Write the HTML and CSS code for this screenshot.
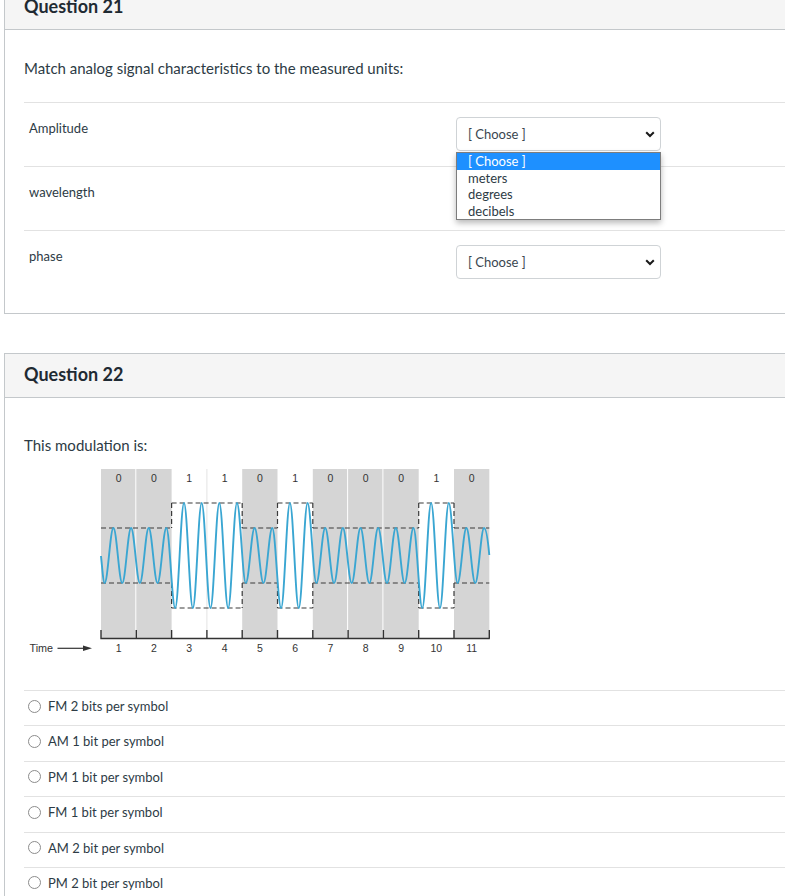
FILE: index.html
```html
<!DOCTYPE html>
<html lang="en">
<head>
<meta charset="utf-8">
<title>Quiz</title>
<link rel="stylesheet" href="styles.css">
</head>
<body>
<div class="page">
  <section class="question q21">
    <header class="q-header"><h2>Question 21</h2></header>
    <div class="q-body">
      <p class="q-text">Match analog signal characteristics to the measured units:</p>
      <div class="match-list">
        <div class="match-row">
          <div class="match-label">Amplitude</div>
          <div class="select-wrap">
            <div class="select"><span>[ Choose ]</span><svg class="chev" width="10" height="7" viewBox="0 0 10 7"><path d="M1.2 1.2 L5 5 L8.8 1.2"/></svg></div>
            <ul class="dropdown">
              <li class="selected">[ Choose ]</li>
              <li>meters</li>
              <li>degrees</li>
              <li>decibels</li>
            </ul>
          </div>
        </div>
        <div class="match-row">
          <div class="match-label">wavelength</div>
          <div class="select-wrap"></div>
        </div>
        <div class="match-row">
          <div class="match-label">phase</div>
          <div class="select-wrap">
            <div class="select"><span>[ Choose ]</span><svg class="chev" width="10" height="7" viewBox="0 0 10 7"><path d="M1.2 1.2 L5 5 L8.8 1.2"/></svg></div>
          </div>
        </div>
      </div>
    </div>
  </section>

  <section class="question q22">
    <header class="q-header"><h2>Question 22</h2></header>
    <div class="q-body">
      <p class="q-text">This modulation is:</p>
      <svg class="diagram" width="470" height="195" viewBox="24 462 470 195">
        <g class="shade">
          <rect x="101" y="469" width="34.3" height="169"/>
          <rect x="136.3" y="469" width="35.3" height="169"/>
          <rect x="242.2" y="469" width="35.3" height="169"/>
          <rect x="312.8" y="469" width="34.3" height="169"/>
          <rect x="348.1" y="469" width="34.3" height="169"/>
          <rect x="383.4" y="469" width="35.3" height="169"/>
          <rect x="454" y="469" width="35.3" height="169"/>
        </g>
        <line class="faint" x1="206.9" y1="469" x2="206.9" y2="630"/>
        <g class="dash">
          <path d="M101 528 H171.6 M101 583 H171.6"/>
          <path d="M171.6 503 H242.2 M171.6 608 H242.2 M171.6 503 V528 M171.6 583 V608 M242.2 503 V528 M242.2 583 V608"/>
          <path d="M242.2 528 H277.5 M242.2 583 H277.5"/>
          <path d="M277.5 503 H312.8 M277.5 608 H312.8 M277.5 503 V528 M277.5 583 V608 M312.8 503 V528 M312.8 583 V608"/>
          <path d="M312.8 528 H418.7 M312.8 583 H418.7"/>
          <path d="M418.7 503 H454 M418.7 608 H454 M418.7 503 V528 M418.7 583 V608 M454 503 V528 M454 583 V608"/>
          <path d="M454 528 H489.3 M454 583 H489.3"/>
        </g>
        <path class="wave" d="M101 556 C102.4 570 103.4 583 104.6 583
          c3.21 0 5.61 -55 8.825 -55 c3.21 0 5.61 55 8.825 55 c3.21 0 5.61 -55 8.825 -55 c3.21 0 5.61 55 8.825 55
          c3.21 0 5.61 -55 8.825 -55 c3.21 0 5.61 55 8.825 55 c3.21 0 5.61 -55 8.825 -55 c3.21 0 5.61 80 8.825 80
          c3.21 0 5.61 -105 8.825 -105 c3.21 0 5.61 105 8.825 105 c3.21 0 5.61 -105 8.825 -105 c3.21 0 5.61 105 8.825 105
          c3.21 0 5.61 -105 8.825 -105 c3.21 0 5.61 105 8.825 105 c3.21 0 5.61 -105 8.825 -105 c3.21 0 5.61 80 8.825 80
          c3.21 0 5.61 -55 8.825 -55 c3.21 0 5.61 55 8.825 55 c3.21 0 5.61 -55 8.825 -55 c3.21 0 5.61 80 8.825 80
          c3.21 0 5.61 -105 8.825 -105 c3.21 0 5.61 105 8.825 105 c3.21 0 5.61 -105 8.825 -105 c3.21 0 5.61 80 8.825 80
          c3.21 0 5.61 -55 8.825 -55 c3.21 0 5.61 55 8.825 55 c3.21 0 5.61 -55 8.825 -55 c3.21 0 5.61 55 8.825 55
          c3.21 0 5.61 -55 8.825 -55 c3.21 0 5.61 55 8.825 55 c3.21 0 5.61 -55 8.825 -55 c3.21 0 5.61 55 8.825 55
          c3.21 0 5.61 -55 8.825 -55 c3.21 0 5.61 55 8.825 55 c3.21 0 5.61 -55 8.825 -55 c3.21 0 5.61 80 8.825 80
          c3.21 0 5.61 -105 8.825 -105 c3.21 0 5.61 105 8.825 105 c3.21 0 5.61 -105 8.825 -105 c3.21 0 5.61 80 8.825 80
          c3.21 0 5.61 -55 8.825 -55 c3.21 0 5.61 55 8.825 55 c3.21 0 5.61 -55 8.825 -55
          c2 0 4 14 5.2 27"/>
        <g class="bits">
          <text x="118.65" y="482">0</text>
          <text x="153.95" y="482">0</text>
          <text x="189.25" y="482">1</text>
          <text x="224.55" y="482">1</text>
          <text x="259.85" y="482">0</text>
          <text x="295.15" y="482">1</text>
          <text x="330.45" y="482">0</text>
          <text x="365.75" y="482">0</text>
          <text x="401.05" y="482">0</text>
          <text x="436.35" y="482">1</text>
          <text x="471.65" y="482">0</text>
        </g>
        <path class="axis" d="M100.3 638.5 H489.8 M101 630 V638.5 M136.3 630 V638.5 M171.6 630 V638.5 M206.9 630 V638.5 M242.2 630 V638.5 M277.5 630 V638.5 M312.8 630 V638.5 M348.1 630 V638.5 M383.4 630 V638.5 M418.7 630 V638.5 M454 630 V638.5 M489.3 630 V638.5"/>
        <g class="bits">
          <text x="118.65" y="652.3">1</text>
          <text x="153.95" y="652.3">2</text>
          <text x="189.25" y="652.3">3</text>
          <text x="224.55" y="652.3">4</text>
          <text x="259.85" y="652.3">5</text>
          <text x="295.15" y="652.3">6</text>
          <text x="330.45" y="652.3">7</text>
          <text x="365.75" y="652.3">8</text>
          <text x="401.05" y="652.3">9</text>
          <text x="436.35" y="652.3">10</text>
          <text x="471.65" y="652.3">11</text>
        </g>
        <text class="time" x="29.5" y="652.3">Time</text>
        <line class="arrow-line" x1="57.5" y1="648.3" x2="85" y2="648.3"/>
        <path class="arrow-head" d="M83 645.6 L92 648.3 L83 651 Z"/>
      </svg>
      <ul class="options">
        <li class="option"><span class="radio"></span>FM 2 bits per symbol</li>
        <li class="option"><span class="radio"></span>AM 1 bit per symbol</li>
        <li class="option"><span class="radio"></span>PM 1 bit per symbol</li>
        <li class="option"><span class="radio"></span>FM 1 bit per symbol</li>
        <li class="option"><span class="radio"></span>AM 2 bit per symbol</li>
        <li class="option"><span class="radio"></span>PM 2 bit per symbol</li>
      </ul>
    </div>
  </section>
</div>
</body>
</html>
```

FILE: styles.css
```css
html, body {
  margin: 0;
  padding: 0;
  overflow: hidden;
  background: #ffffff;
}

body {
  font-family: Lato, "Noto Sans", sans-serif;
  color: #2d3b45;
}

.page {
  padding-left: 4px;
}

.question {
  border: 1px solid #c4c8cb;
  margin-right: -40px;
  background: #ffffff;
}

.q21 {
  margin-top: -15px;
}

.q22 {
  margin-top: 39px;
}

.q-header {
  background: #f5f5f5;
  border-bottom: 1px solid #c4c8cb;
  display: flex;
  align-items: center;
  padding: 0 19px 4px;
  box-sizing: content-box;
  height: 39px;
}

.q-header h2 {
  margin: 0;
  font-size: 18px;
  font-weight: 700;
  line-height: 22px;
  color: #1f2a33;
}

.q-body {
  padding: 26px 0 19px 19px;
}

.q-text {
  margin: 0;
  font-size: 15px;
  line-height: 24px;
}

.q21 .q-text {
  margin-bottom: 22px;
}

.q22 .q-body {
  padding-top: 35px;
  padding-bottom: 0;
}

.q22 .q-text {
  margin-bottom: 5px;
}

/* matching rows */
.match-row {
  border-top: 1px solid #e2e2e2;
  display: flex;
  align-items: flex-start;
  padding: 14px 0 0 5px;
  box-sizing: content-box;
  height: 49px;
}

.match-label {
  flex: 0 0 427px;
  font-size: 13px;
  line-height: 18px;
  margin-top: 2px;
}

.select-wrap {
  position: relative;
  width: 205px;
}

.select {
  box-sizing: border-box;
  width: 205px;
  height: 34px;
  border: 1px solid #cfd3d6;
  border-radius: 4px;
  padding: 0 5px 0 11px;
  display: flex;
  align-items: center;
  justify-content: space-between;
  font-size: 13px;
  color: #3a4650;
  background: #ffffff;
}

.chev {
  display: block;
  margin-top: 1px;
}

.chev path {
  fill: none;
  stroke: #1a1a1a;
  stroke-width: 2;
}

.dropdown {
  position: absolute;
  top: 35px;
  left: 0;
  width: 205px;
  box-sizing: border-box;
  margin: 0;
  padding: 0;
  list-style: none;
  background: #ffffff;
  border: 1px solid #7d7d7d;
  box-shadow: 0 3px 6px rgba(0, 0, 0, 0.28);
  z-index: 2;
}

.dropdown li {
  height: 16.6px;
  line-height: 16.6px;
  padding-left: 11px;
  font-size: 13px;
  color: #2d3b45;
}

.dropdown li.selected {
  background: #1e90ff;
  color: #ffffff;
}

/* diagram */
.diagram {
  display: block;
}

.shade rect {
  fill: #d5d5d5;
}

.faint {
  stroke: #e4e4e4;
  stroke-width: 1;
}

.dash path {
  fill: none;
  stroke: #3a3a3a;
  stroke-width: 1.2;
  stroke-dasharray: 5 3;
}

.wave {
  fill: none;
  stroke: #3aa6d2;
  stroke-width: 1.9;
}

.axis {
  fill: none;
  stroke: #333333;
  stroke-width: 1.4;
}

.bits text {
  font-family: "Liberation Sans", Arial, sans-serif;
  font-size: 10.5px;
  fill: #333333;
  text-anchor: middle;
}

.time {
  font-family: "Liberation Sans", Arial, sans-serif;
  font-size: 10.8px;
  fill: #333333;
}

.arrow-line {
  stroke: #333333;
  stroke-width: 1.2;
}

.arrow-head {
  fill: #333333;
}

/* options */
.options {
  list-style: none;
  margin: 33px 0 0 0;
  padding: 0;
}

.option {
  border-top: 1px solid #e2e2e2;
  box-sizing: content-box;
  height: 28.4px;
  padding-top: 6px;
  display: flex;
  align-items: flex-start;
  font-size: 13px;
  line-height: 18px;
}

.radio {
  display: block;
  box-sizing: border-box;
  width: 13px;
  height: 13px;
  margin: 2.5px 7px 0 4px;
  border: 1px solid #8c8c8c;
  border-radius: 50%;
  background: #ffffff;
  flex: 0 0 auto;
}
```
